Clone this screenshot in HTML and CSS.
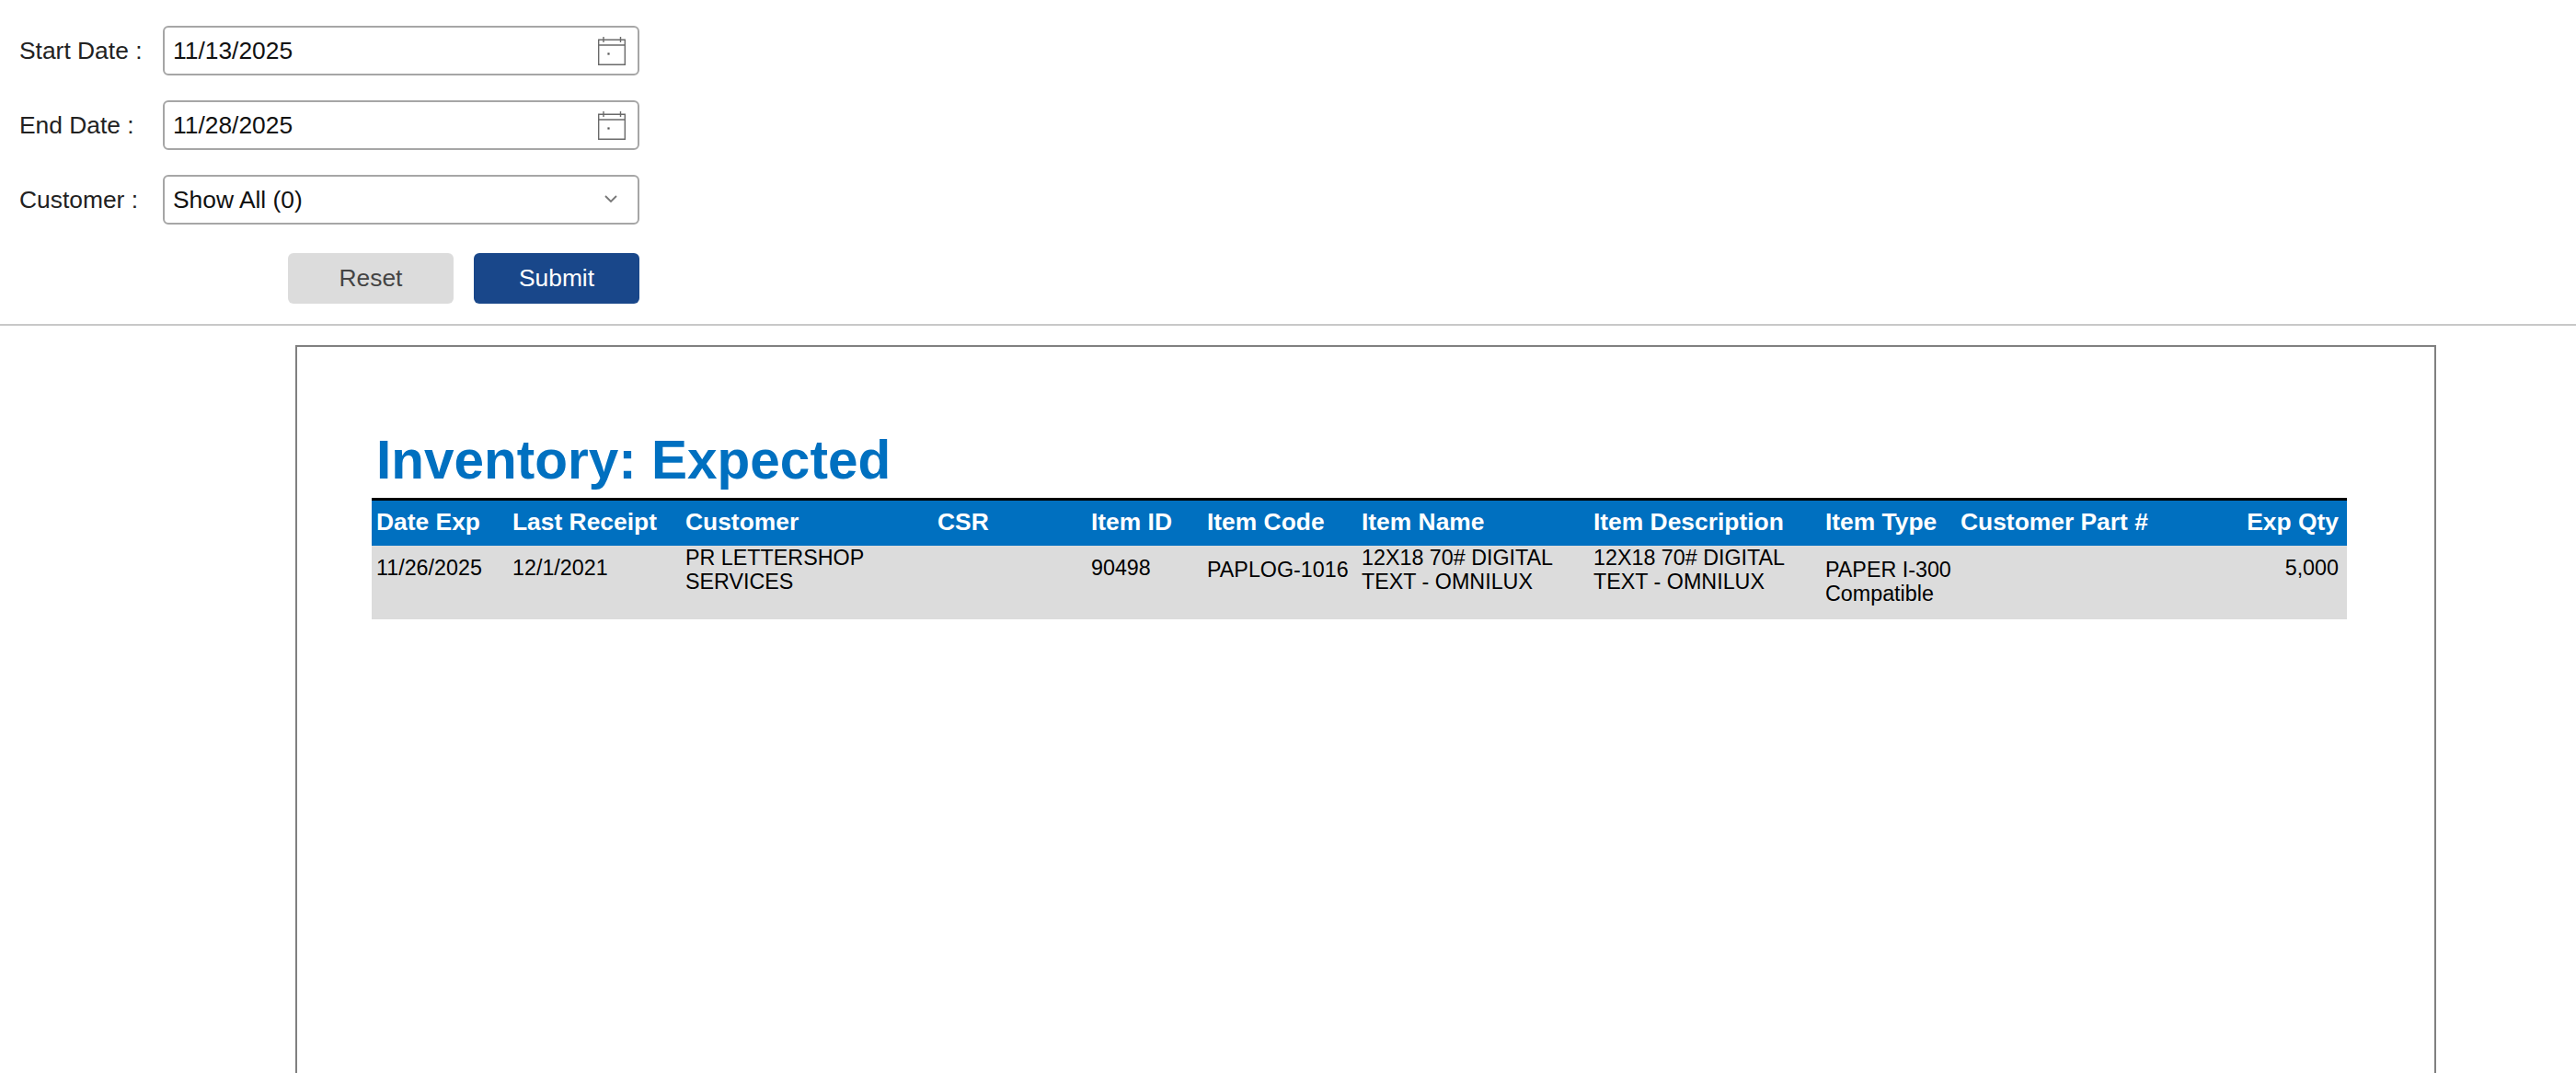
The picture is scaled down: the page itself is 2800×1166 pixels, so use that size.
FILE: index.html
```html
<!DOCTYPE html>
<html lang="en">
<head>
  <meta charset="UTF-8">
  <title>Inventory: Expected</title>
  <link rel="stylesheet" href="styles.css">
</head>
<body>
  <form class="filters">
    <div class="filter-row">
      <span class="filter-label">Start Date :</span>
      <div class="field">
        <span>11/13/2025</span>
        <svg class="cal-icon" viewBox="0 0 30 31" fill="none" stroke="#6a6a6a" stroke-width="1.4">
          <path d="M.7 3.2h28.6v27H.7zM.7 9h28.6"/>
          <path d="M6 0v6M24.5 0v6"/>
          <rect x="10.4" y="17.4" width="2.2" height="2.2" fill="#555" stroke="none"/>
        </svg>
      </div>
    </div>
    <div class="filter-row">
      <span class="filter-label">End Date :</span>
      <div class="field">
        <span>11/28/2025</span>
        <svg class="cal-icon" viewBox="0 0 30 31" fill="none" stroke="#6a6a6a" stroke-width="1.4">
          <path d="M.7 3.2h28.6v27H.7zM.7 9h28.6"/>
          <path d="M6 0v6M24.5 0v6"/>
          <rect x="10.4" y="17.4" width="2.2" height="2.2" fill="#555" stroke="none"/>
        </svg>
      </div>
    </div>
    <div class="filter-row">
      <span class="filter-label">Customer :</span>
      <div class="field">
        <span>Show All (0)</span>
        <svg class="chevron" viewBox="0 0 14 8" fill="none" stroke="#777" stroke-width="1.8">
          <path d="M1 1l6 6 6-6"/>
        </svg>
      </div>
    </div>
    <div class="filter-actions">
      <button type="button" class="btn btn-reset">Reset</button>
      <button type="button" class="btn btn-submit">Submit</button>
    </div>
  </form>

  <hr class="divider">

  <div class="report">
    <h1 class="report-title">Inventory: Expected</h1>
    <table class="report-table">
      <colgroup>
        <col class="c-date"><col class="c-receipt"><col class="c-customer"><col class="c-csr"><col class="c-id">
        <col class="c-code"><col class="c-name"><col class="c-desc"><col class="c-type"><col class="c-part">
      </colgroup>
      <thead>
        <tr>
          <th>Date Exp</th>
          <th>Last Receipt</th>
          <th>Customer</th>
          <th>CSR</th>
          <th>Item ID</th>
          <th>Item Code</th>
          <th>Item Name</th>
          <th>Item Description</th>
          <th>Item Type</th>
          <th>Customer Part #</th>
          <th class="num">Exp Qty</th>
        </tr>
      </thead>
      <tbody>
        <tr>
          <td class="mid">11/26/2025</td>
          <td class="mid">12/1/2021</td>
          <td>PR LETTERSHOP SERVICES</td>
          <td></td>
          <td class="mid">90498</td>
          <td class="low">PAPLOG-1016</td>
          <td>12X18 70# DIGITAL TEXT - OMNILUX</td>
          <td>12X18 70# DIGITAL TEXT - OMNILUX</td>
          <td class="low">PAPER I-300 Compatible</td>
          <td></td>
          <td class="mid num">5,000</td>
        </tr>
      </tbody>
    </table>
  </div>
</body>
</html>
```

FILE: styles.css
```css
html, body {
  height: 100%;
  overflow: hidden;
}

body {
  margin: 0;
  display: flex;
  flex-direction: column;
  font-family: "Liberation Sans", Arial, sans-serif;
  color: #222;
  background: #fff;
}

.filters {
  width: 695px;
  padding: 28px 0 0 21px;
  box-sizing: border-box;
  display: flex;
  flex-direction: column;
  gap: 27px;
}

.filter-row {
  display: flex;
  align-items: center;
}

.filter-label {
  width: 156px;
  font-size: 26.4px;
}

.field {
  position: relative;
  flex: 1;
  height: 54px;
  box-sizing: border-box;
  display: flex;
  align-items: center;
  padding-left: 9px;
  font-size: 26.4px;
  color: #111;
  border: 2px solid #a6a6a6;
  border-radius: 6px;
}

.cal-icon {
  position: absolute;
  right: 13px;
  top: 10px;
  width: 30px;
  height: 31px;
}

.chevron {
  position: absolute;
  right: 22px;
  top: 20px;
  width: 14px;
  height: 8px;
}

.filter-actions {
  display: flex;
  justify-content: flex-end;
  gap: 22px;
  margin-top: 4px;
}

.btn {
  width: 180px;
  height: 55px;
  border: none;
  border-radius: 6px;
  font-family: inherit;
  font-size: 26.4px;
}

.btn-reset {
  background: #dcdcdc;
  color: #444;
}

.btn-submit {
  background: #19478a;
  color: #fff;
}

.divider {
  flex: none;
  width: 100%;
  height: 2px;
  margin: 22px 0 0;
  border: none;
  background: #c8c8c8;
}

.report {
  flex: 1;
  width: 2327px;
  margin: 21px 0 0 321px;
  padding: 88px 94px 0 81px;
  box-sizing: border-box;
  border: 2px solid #808080;
  border-bottom: none;
}

.report-title {
  margin: 0 0 6px 5px;
  font-size: 58.5px;
  line-height: 70px;
  color: #0070c0;
}

.report-table {
  width: 2147px;
  border-collapse: separate;
  border-spacing: 0;
  table-layout: fixed;
  border-top: 3px solid #000;
}

.report-table th {
  height: 49px;
  padding: 0 9px 2px 5px;
  box-sizing: border-box;
  text-align: left;
  font-size: 26.4px;
  color: #fff;
  background: #0070c0;
  white-space: nowrap;
}

.report-table td {
  height: 80px;
  padding: 0 4px 0 5px;
  box-sizing: border-box;
  vertical-align: top;
  font-size: 23.3px;
  line-height: 26px;
  color: #000;
  background: #dcdcdc;
}

.report-table td.mid {
  padding-top: 11px;
}

.report-table td.low {
  padding-top: 13px;
}

.report-table .num {
  padding-right: 9px;
  text-align: right;
}

.c-date { width: 148px; }
.c-receipt { width: 188px; }
.c-customer { width: 274px; }
.c-csr { width: 167px; }
.c-id { width: 126px; }
.c-code { width: 168px; }
.c-name { width: 252px; }
.c-desc { width: 252px; }
.c-type { width: 147px; }
.c-part { width: 292px; }
```
